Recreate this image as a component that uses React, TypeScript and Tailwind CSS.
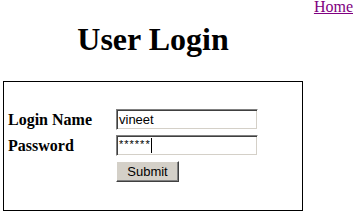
export default function App() {
  return (
    <div className="w-[354px] h-[215px] overflow-hidden bg-white text-black font-['Liberation_Serif',serif]">
      {/* link bar */}
      <div className="flex justify-end pr-[1px]">
        <a href="#" className="text-[16px] leading-[14px] text-[#800080] underline">
          Home
        </a>
      </div>

      <div className="ml-[3px] w-[300px]">
        <h1 className="mt-[9px] text-center text-[32px] leading-[32px] font-bold">User Login</h1>

        {/* login box */}
        <form className="mt-[26px] h-[130px] border border-black pt-[27px] pl-[4px] flex flex-col gap-[5px]">
          <div className="flex items-center h-[21px]">
            <label className="w-[108px] text-[16px] leading-[21px] font-bold">Login Name</label>
            <div className="w-[142px] h-[21px] flex items-center pl-[2px] border border-t-[#808080] border-l-[#808080] border-b-white border-r-white shadow-[inset_1px_1px_0_#404040,inset_-1px_-1px_0_#d4d0c8] font-['Liberation_Sans',sans-serif] text-[13px] leading-[15px]">
              vineet
            </div>
          </div>
          <div className="flex items-center h-[21px]">
            <label className="w-[108px] text-[16px] leading-[21px] font-bold">Password</label>
            <div className="w-[142px] h-[21px] flex items-center pl-[2px] border border-t-[#808080] border-l-[#808080] border-b-white border-r-white shadow-[inset_1px_1px_0_#404040,inset_-1px_-1px_0_#d4d0c8] font-['Liberation_Sans',sans-serif] text-[13px] leading-[15px]">
              <span className="text-[11px] tracking-[1px] self-start mt-[1px]">******</span>
              <span className="w-[1px] h-[15px] bg-black" />
            </div>
          </div>
          <div className="flex h-[21px] pl-[108px]">
            <button
              type="button"
              className="w-[63px] h-[21px] bg-[#d4d0c8] border border-t-white border-l-white border-b-[#404040] border-r-[#404040] shadow-[inset_-1px_-1px_0_#808080] font-['Liberation_Sans',sans-serif] text-[13px] leading-[15px] text-black"
            >
              Submit
            </button>
          </div>
        </form>
      </div>
    </div>
  );
}
